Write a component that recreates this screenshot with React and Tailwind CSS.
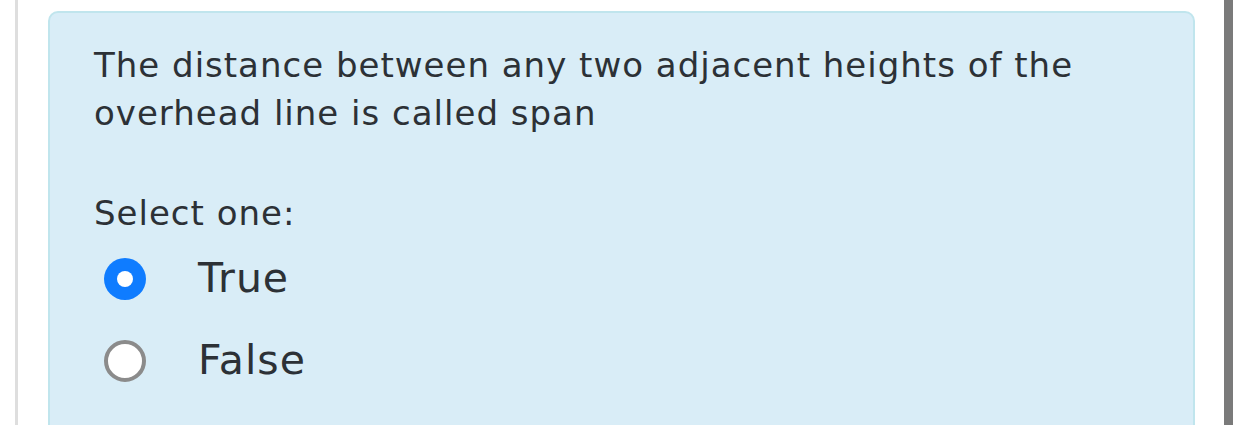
export default function App() {
  const font = { fontFamily: '"DejaVu Sans", Verdana, sans-serif' };
  return (
    <div className="w-[1242px] h-[425px] bg-white flex overflow-hidden" style={font}>
      <div className="w-[15px] shrink-0" />
      <div className="w-[3px] shrink-0 bg-[#dedede]" />
      <div className="w-[30px] shrink-0" />
      <div className="flex-1 pt-[11px]">
        <div className="h-[440px] rounded-[10px] border-2 border-[#c0e5ed] bg-[#d9edf7] pl-[44px] pr-[40px] pt-[28px] text-[#2c3136]">
          <p className="text-[34px] leading-[48px] tracking-[1px]">
            The distance between any two adjacent heights of the overhead line is called span
          </p>
          <p className="mt-[52px] text-[34px] leading-[48px] tracking-[1px]">Select one:</p>
          <div className="mt-[1px] flex flex-col">
            <label className="flex items-center h-[82px]">
              <span className="w-[42px] h-[42px] rounded-full bg-[#0f7cff] flex items-center justify-center ml-[10px]">
                <span className="w-[16px] h-[16px] rounded-full bg-white" />
              </span>
              <span className="ml-[52px] text-[41px] tracking-[1px]">True</span>
            </label>
            <label className="flex items-center h-[82px]">
              <span className="w-[42px] h-[42px] rounded-full bg-white border-[4px] border-[#8b8b8b] ml-[10px]" />
              <span className="ml-[52px] text-[41px] tracking-[1px]">False</span>
            </label>
          </div>
        </div>
      </div>
      <div className="w-[29px] shrink-0" />
      <div className="w-[9px] shrink-0 bg-[#7a7a7a]" />
      <div className="w-[9px] shrink-0" />
    </div>
  );
}
